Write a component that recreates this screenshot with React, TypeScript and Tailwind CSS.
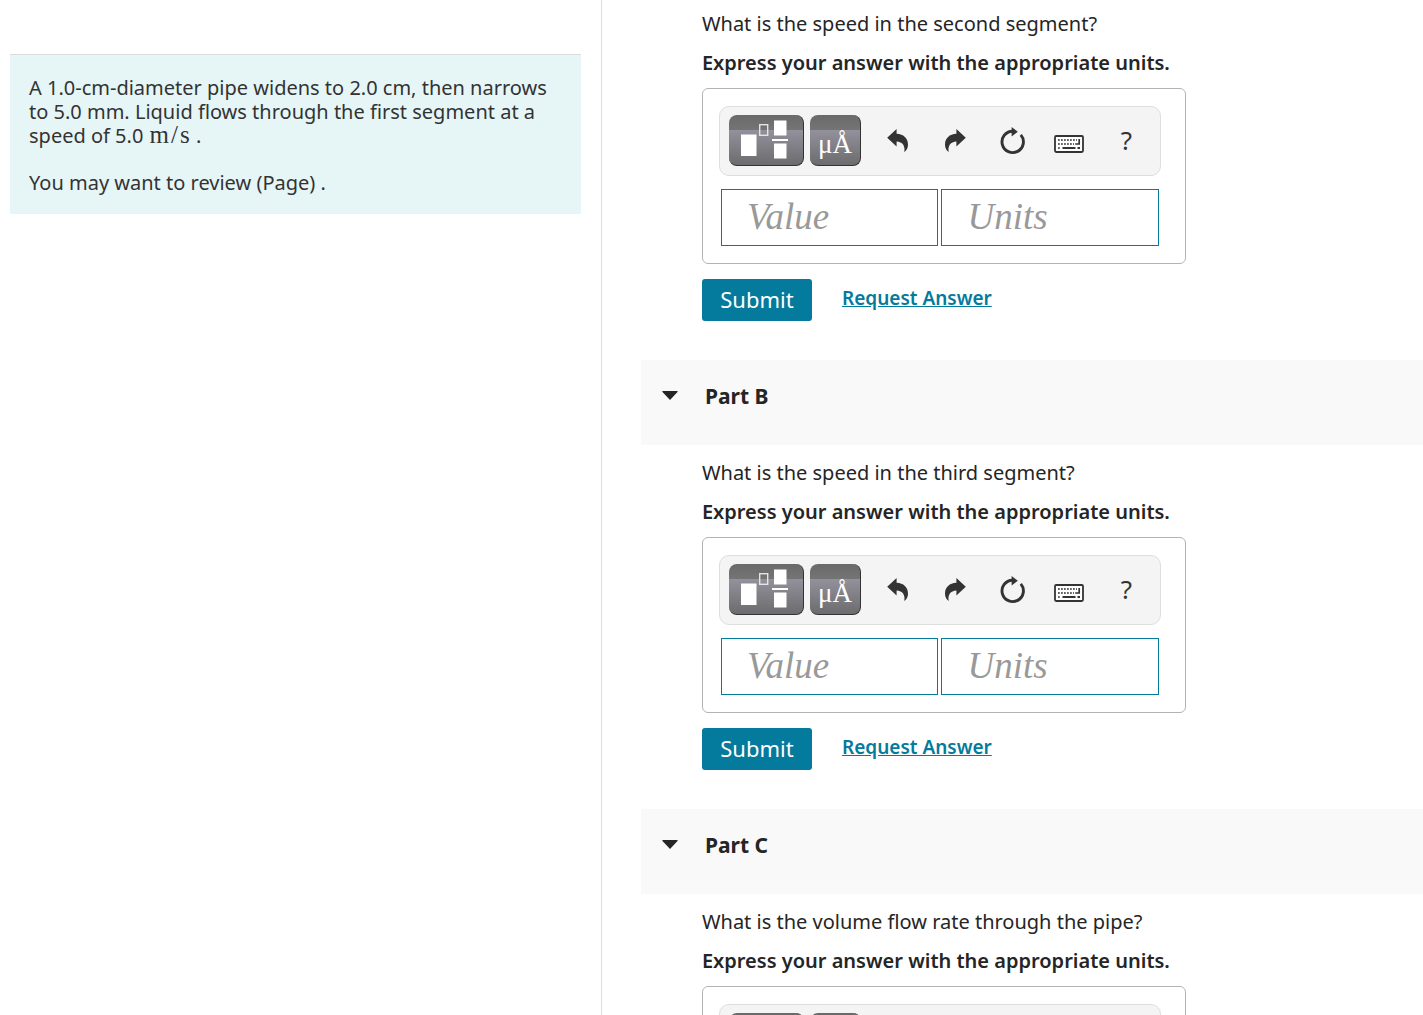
import { clsx } from "clsx";

type TPart = {
  id: string;
  title?: string;
  question: string;
};

const parts: TPart[] = [
  { id: "a", question: "What is the speed in the second segment?" },
  {
    id: "b",
    title: "Part B",
    question: "What is the speed in the third segment?",
  },
  {
    id: "c",
    title: "Part C",
    question: "What is the volume flow rate through the pipe?",
  },
];

const TemplateIcon = () => (
  <svg width="75" height="51" viewBox="0 0 75 51" aria-hidden="true">
    <rect x="12" y="19.5" width="15.5" height="21.5" fill="#fff" />
    <rect
      x="30.7"
      y="9.7"
      width="8"
      height="10.6"
      fill="none"
      stroke="#e4e4e6"
      strokeWidth="1.4"
    />
    <rect x="45" y="5.5" width="12.5" height="15" fill="#fff" />
    <rect x="43" y="24" width="16" height="2" fill="#fff" />
    <rect x="45" y="28.5" width="12.5" height="15" fill="#fff" />
  </svg>
);

const UndoIcon = ({ flip = false }: { flip?: boolean }) => (
  <svg
    width="22"
    height="24"
    viewBox="0 0 22 24"
    className={clsx(flip && "-scale-x-100")}
    aria-hidden="true"
  >
    <path
      d="M0.2 8.7 9.6 0V4.8C16.5 5 21 9.3 21 15.7 21 18.7 19.6 21.3 17.2 23.1 18.6 17.1 15.4 12.7 9.6 12.5V17.4Z"
      fill="#333"
    />
  </svg>
);

const ResetIcon = () => (
  <svg width="26" height="28" viewBox="0 0 26 28" aria-hidden="true">
    <path
      d="M21.8 7.9A10.7 10.7 0 1 1 13.4 4.2"
      fill="none"
      stroke="#333"
      strokeWidth="2.9"
    />
    <path d="M12.6 0 18.8 4.8 12.6 9.6Z" fill="#333" />
  </svg>
);

const KeyboardIcon = () => (
  <svg width="30" height="18" viewBox="0 0 30 18" aria-hidden="true">
    <rect
      x="1"
      y="1"
      width="28"
      height="16"
      rx="1.2"
      fill="#fff"
      stroke="#333"
      strokeWidth="1.8"
    />
    <path
      d="M4 5H23M4 9H20M4 13H7"
      stroke="#333"
      strokeWidth="1.7"
      strokeDasharray="1.8 1.2"
    />
    <path d="M8.5 13H21.5M23.5 13H26" stroke="#333" strokeWidth="1.8" />
    <path d="M25.2 4V9H21.2" fill="none" stroke="#333" strokeWidth="1.7" />
  </svg>
);

const darkButton =
  "h-[51px] shrink-0 overflow-hidden rounded-lg border-r border-b border-[#333] bg-[linear-gradient(#6a6a6a_0%,#747474_29%,#93919c_30%,#6c6c6e_100%)]";

const toolButton =
  "flex h-[51px] w-[57px] shrink-0 items-center justify-center text-[#333]";

const inputBox =
  "h-[57px] w-full min-w-0 border border-[#047a9c] px-[25px] pb-[3px] placeholder:text-[#999]";

const AnswerBox = ({ id }: { id: string }) => {
  return (
    <div className="w-[484px] max-w-full rounded-md border border-[#b3b3b3] pt-[17px] pr-6 pb-[17px] pl-4">
      <div className="flex h-[70px] items-start gap-1.5 rounded-[10px] border border-[#dedede] bg-[#f4f4f4] px-[9px] pt-2">
        <button
          type="button"
          aria-label="Templates"
          className={clsx(darkButton, "w-[75px]")}
        >
          <TemplateIcon />
        </button>
        <button
          type="button"
          aria-label="Units"
          className={clsx(
            darkButton,
            "w-[51px] pt-2 font-['Liberation_Serif',serif] text-[27px] text-white",
          )}
        >
          μÅ
        </button>
        <div className="ml-[3px] flex">
          <button type="button" aria-label="Undo" className={toolButton}>
            <UndoIcon />
          </button>
          <button type="button" aria-label="Redo" className={toolButton}>
            <UndoIcon flip />
          </button>
          <button type="button" aria-label="Reset" className={toolButton}>
            <ResetIcon />
          </button>
          <button
            type="button"
            aria-label="Keyboard"
            className={clsx(toolButton, "pt-1.5")}
          >
            <KeyboardIcon />
          </button>
          <button
            type="button"
            aria-label="Help"
            className={clsx(toolButton, "pb-0.5 text-[26px]")}
          >
            ?
          </button>
        </div>
      </div>
      <div className="mt-[13px] flex gap-[3px] px-0.5 font-['Liberation_Serif',serif] text-[37px] italic">
        <input
          id={`${id}-value`}
          aria-label="Value"
          placeholder="Value"
          className={inputBox}
        />
        <input
          id={`${id}-units`}
          aria-label="Units"
          placeholder="Units"
          className={inputBox}
        />
      </div>
    </div>
  );
};

const Part = ({ id, title, question }: TPart) => {
  return (
    <section>
      {title && (
        <header className="flex h-[85px] items-start bg-[#f9f9f9] pt-6 pl-[21px]">
          <button
            type="button"
            className="flex items-center gap-[27px] text-[21px] leading-6 font-bold"
          >
            <svg width="16" height="10" viewBox="0 0 16 10" aria-hidden="true">
              <path
                d="M1 0H15Q16.5 0 15.3 1.2L8 9 0.7 1.2Q-0.5 0 1 0Z"
                fill="#252525"
              />
            </svg>
            {title}
          </button>
        </header>
      )}
      <div className={clsx("pb-[39px] pl-[61px]", title ? "pt-4" : "pt-3")}>
        <p>{question}</p>
        <p className="mt-[15px] mb-[13px] font-semibold">
          Express your answer with the appropriate units.
        </p>
        <AnswerBox id={id} />
        <div className="mt-[15px] flex items-center gap-[30px]">
          <button
            type="button"
            className="h-[42px] w-[110px] rounded-[3px] bg-[#047a9c] pb-0.5 text-[22px] text-white"
          >
            Submit
          </button>
          <a
            href="#request"
            className="pb-1 text-[19px] font-semibold text-[#047a9c] underline"
          >
            Request Answer
          </a>
        </div>
      </div>
    </section>
  );
};

const App = () => {
  return (
    <main className="flex h-screen overflow-hidden bg-white font-['Noto_Sans',sans-serif] text-[20px] leading-6 text-[#333]">
      <aside className="w-[42.3%] shrink-0 border-r border-[#d6dfe9] pt-[54px] pr-5 pl-2.5">
        <div className="border-t border-[#d9dedd] bg-[#e6f6f7] px-[19px] pt-[21px] pb-[19px]">
          <p>
            A 1.0-cm-diameter pipe widens to 2.0 cm, then narrows to 5.0 mm.
            Liquid flows through the first segment at a speed of 5.0{" "}
            <span className="mx-px font-['Liberation_Serif',serif] text-[25px] leading-4">
              m<span className="px-0.5">/</span>s
            </span>{" "}
            .
          </p>
          <p className="mt-[23px]">You may want to review (Page) .</p>
        </div>
      </aside>
      <div className="grow overflow-hidden pl-[39px] text-[#252525]">
        {parts.map((part) => (
          <Part key={part.id} {...part} />
        ))}
      </div>
    </main>
  );
};

export default App;
